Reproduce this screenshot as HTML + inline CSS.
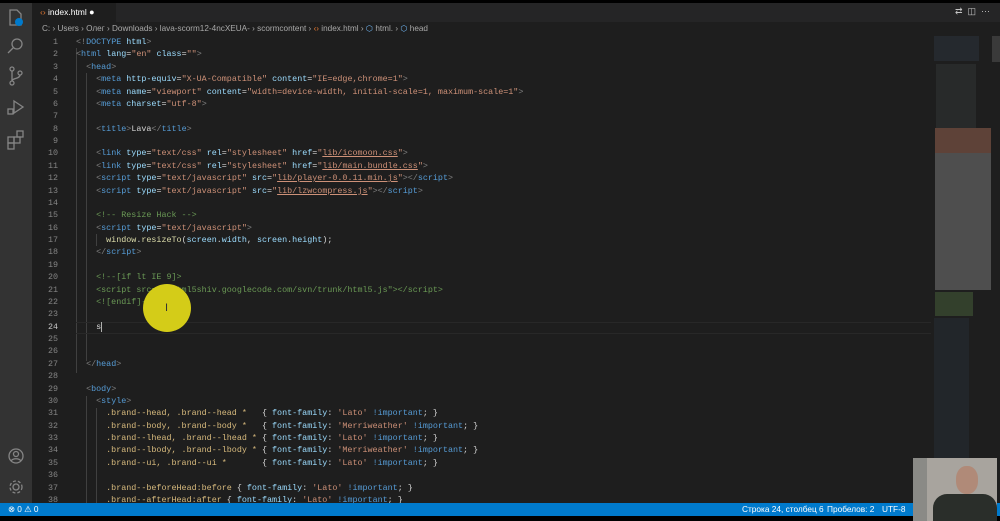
<!DOCTYPE html>
<html><head><meta charset="utf-8">
<style>
*{margin:0;padding:0;box-sizing:border-box}
body{width:1000px;height:521px;background:#1e1e1e;position:relative;overflow:hidden;font-family:"Liberation Sans",sans-serif}
.top{position:absolute;left:0;top:0;width:1000px;height:3px;background:#000}
.act{position:absolute;left:0;top:3px;width:32px;height:500px;background:#333}
.tabs{position:absolute;left:32px;top:3px;width:968px;height:19px;background:#252526}
.tab{position:absolute;left:0;top:0;height:19px;width:84px;background:#1e1e1e;color:#fff;font-size:8.5px;line-height:19px;padding-left:8px}
.bc{position:absolute;left:42px;top:23px;color:#a9a9a9;font-size:8.2px;white-space:nowrap}
.code{position:absolute;left:0;top:36px;font-family:"Liberation Mono",monospace;font-size:8.4px;line-height:12.38px;white-space:pre;color:#d4d4d4}
.ln{position:absolute;left:34px;width:24px;text-align:right;color:#858585}
.tx{position:absolute;left:76px}
.t{color:#569cd6}.g{color:#808080}.a{color:#9cdcfe}.s{color:#ce9178}.c{color:#6a9955}.u{text-decoration:underline}
.status{position:absolute;left:0;top:503px;width:1000px;height:13px;background:#007acc;color:#fff;font-size:8.3px;line-height:13px}
.bot{position:absolute;left:0;top:516px;width:1000px;height:5px;background:#000}
.mini{position:absolute;left:934px;top:36px;width:57px;height:422px}
.guide{position:absolute;width:1px;background:#404040}
</style></head><body>
<div class="top"></div>
<div class="act">
<svg width="32" height="500" fill="none" stroke="#858585" stroke-width="1.3">
<path d="M10 7h7l4 4v11h-11z M13 5v0"/><circle cx="19" cy="19" r="4" fill="#007acc" stroke="none"/>
<circle cx="17" cy="41" r="5"/><path d="M13 45l-5 5"/>
<circle cx="12" cy="66" r="2"/><circle cx="12" cy="80" r="2"/><circle cx="20" cy="70" r="2"/><path d="M12 68v10 M20 72c0 4-8 3-8 6"/>
<path d="M14 98l9 6-9 6z"/><rect x="8" y="106" width="5" height="5"/>
<rect x="8" y="134" width="6" height="6"/><rect x="14" y="134" width="6" height="6"/><rect x="8" y="140" width="6" height="6"/><rect x="17" y="128" width="6" height="6"/>
<circle cx="16" cy="453" r="7"/><circle cx="16" cy="451" r="2.5"/><path d="M11 458c2-3 8-3 10 0"/>
<circle cx="16" cy="484" r="3"/><circle cx="16" cy="484" r="6" stroke-dasharray="3 2"/>
</svg></div>
<div class="tabs"><div class="tab"><span style="color:#e37933">‹›</span> index.html <span style="font-size:9px">●</span></div>
<div style="position:absolute;right:10px;top:3px;color:#c5c5c5;font-size:9px">⇄ &nbsp;◫ &nbsp;···</div></div>
<div class="bc">C: › Users › Олег › Downloads › lava-scorm12-4ncXEUA- › scormcontent › <span style="color:#e37933">‹›</span> index.html › <span style="color:#75beff">⬡</span> html. › <span style="color:#75beff">⬡</span> head</div>
<div class="guide" style="left:76px;top:48px;height:325px"></div>
<div class="guide" style="left:86px;top:73px;height:288px"></div>
<div class="guide" style="left:96px;top:234px;height:12px"></div>
<div class="guide" style="left:86px;top:396px;height:107px"></div>
<div class="guide" style="left:96px;top:408px;height:95px"></div>
<div style="position:absolute;left:76px;top:322px;width:855px;height:12px;border-top:1px solid #282828;border-bottom:1px solid #282828"></div>
<div class="code">
<div class="ln" style="top:0">1
2
3
4
5
6
7
8
9
10
11
12
13
14
15
16
17
18
19
20
21
22
23
<span style="color:#c6c6c6">24</span>
25
26
27
28
29
30
31
32
33
34
35
36
37
38</div>
<div class="tx" style="top:0"><span class="g">&lt;!</span><span class="t">DOCTYPE</span> <span class="a">html</span><span class="g">&gt;</span>
<span class="g">&lt;</span><span class="t">html</span> <span class="a">lang</span>=<span class="s">"en"</span> <span class="a">class</span>=<span class="s">""</span><span class="g">&gt;</span>
  <span class="g">&lt;</span><span class="t">head</span><span class="g">&gt;</span>
    <span class="g">&lt;</span><span class="t">meta</span> <span class="a">http-equiv</span>=<span class="s">"X-UA-Compatible"</span> <span class="a">content</span>=<span class="s">"IE=edge,chrome=1"</span><span class="g">&gt;</span>
    <span class="g">&lt;</span><span class="t">meta</span> <span class="a">name</span>=<span class="s">"viewport"</span> <span class="a">content</span>=<span class="s">"width=device-width, initial-scale=1, maximum-scale=1"</span><span class="g">&gt;</span>
    <span class="g">&lt;</span><span class="t">meta</span> <span class="a">charset</span>=<span class="s">"utf-8"</span><span class="g">&gt;</span>

    <span class="g">&lt;</span><span class="t">title</span><span class="g">&gt;</span>Lava<span class="g">&lt;/</span><span class="t">title</span><span class="g">&gt;</span>

    <span class="g">&lt;</span><span class="t">link</span> <span class="a">type</span>=<span class="s">"text/css"</span> <span class="a">rel</span>=<span class="s">"stylesheet"</span> <span class="a">href</span>=<span class="s">"<span class="u">lib/icomoon.css</span>"</span><span class="g">&gt;</span>
    <span class="g">&lt;</span><span class="t">link</span> <span class="a">type</span>=<span class="s">"text/css"</span> <span class="a">rel</span>=<span class="s">"stylesheet"</span> <span class="a">href</span>=<span class="s">"<span class="u">lib/main.bundle.css</span>"</span><span class="g">&gt;</span>
    <span class="g">&lt;</span><span class="t">script</span> <span class="a">type</span>=<span class="s">"text/javascript"</span> <span class="a">src</span>=<span class="s">"<span class="u">lib/player-0.0.11.min.js</span>"</span><span class="g">&gt;&lt;/</span><span class="t">script</span><span class="g">&gt;</span>
    <span class="g">&lt;</span><span class="t">script</span> <span class="a">type</span>=<span class="s">"text/javascript"</span> <span class="a">src</span>=<span class="s">"<span class="u">lib/lzwcompress.js</span>"</span><span class="g">&gt;&lt;/</span><span class="t">script</span><span class="g">&gt;</span>

    <span class="c">&lt;!-- Resize Hack --&gt;</span>
    <span class="g">&lt;</span><span class="t">script</span> <span class="a">type</span>=<span class="s">"text/javascript"</span><span class="g">&gt;</span>
      <span style="color:#dcdcaa">window</span>.<span style="color:#dcdcaa">resizeTo</span>(<span class="a">screen</span>.<span class="a">width</span>, <span class="a">screen</span>.<span class="a">height</span>);
    <span class="g">&lt;/</span><span class="t">script</span><span class="g">&gt;</span>

    <span class="c">&lt;!--[if lt IE 9]&gt;</span>
    <span class="c">&lt;script src="//html5shiv.googlecode.com/svn/trunk/html5.js"&gt;&lt;/script&gt;</span>
    <span class="c">&lt;![endif]--&gt;</span>

    s<span style="border-left:1px solid #aeafad"></span>


  <span class="g">&lt;/</span><span class="t">head</span><span class="g">&gt;</span>

  <span class="g">&lt;</span><span class="t">body</span><span class="g">&gt;</span>
    <span class="g">&lt;</span><span class="t">style</span><span class="g">&gt;</span>
      <span style="color:#d7ba7d">.brand--head, .brand--head *</span>   { <span class="a">font-family</span>: <span class="s">'Lato'</span> <span class="t">!important</span>; }
      <span style="color:#d7ba7d">.brand--body, .brand--body *</span>   { <span class="a">font-family</span>: <span class="s">'Merriweather'</span> <span class="t">!important</span>; }
      <span style="color:#d7ba7d">.brand--lhead, .brand--lhead *</span> { <span class="a">font-family</span>: <span class="s">'Lato'</span> <span class="t">!important</span>; }
      <span style="color:#d7ba7d">.brand--lbody, .brand--lbody *</span> { <span class="a">font-family</span>: <span class="s">'Merriweather'</span> <span class="t">!important</span>; }
      <span style="color:#d7ba7d">.brand--ui, .brand--ui *</span>       { <span class="a">font-family</span>: <span class="s">'Lato'</span> <span class="t">!important</span>; }

      <span style="color:#d7ba7d">.brand--beforeHead:before</span> { <span class="a">font-family</span>: <span class="s">'Lato'</span> <span class="t">!important</span>; }
      <span style="color:#d7ba7d">.brand--afterHead:after</span> { <span class="a">font-family</span>: <span class="s">'Lato'</span> <span class="t">!important</span>; }</div>
</div>
<div style="position:absolute;left:143px;top:284px;width:48px;height:48px;border-radius:50%;background:#d4cc18"></div>
<div style="position:absolute;left:165px;top:302px;color:#333;font-size:11px">I</div>
<div class="mini">
<div style="position:absolute;left:0;top:0;width:45px;height:25px;background:#25292e"></div>
<div style="position:absolute;left:2px;top:28px;width:40px;height:90px;background:#282a2a"></div>
<div style="position:absolute;left:1px;top:92px;width:56px;height:25px;background:#5e4238"></div>
<div style="position:absolute;left:1px;top:117px;width:56px;height:137px;background:#4e4e4e"></div>
<div style="position:absolute;left:1px;top:256px;width:38px;height:24px;background:#33402c"></div>
<div style="position:absolute;left:0;top:282px;width:35px;height:140px;background:#22262a"></div>
</div>
<div style="position:absolute;left:992px;top:36px;width:8px;height:26px;background:#3a3a3a"></div>
<div class="status"><span style="position:absolute;left:8px">⊗ 0 ⚠ 0</span>
<span style="position:absolute;left:742px">Строка 24, столбец 6</span>
<span style="position:absolute;left:827px">Пробелов: 2</span>
<span style="position:absolute;left:882px">UTF-8</span></div>
<div class="bot"></div>
<div style="position:absolute;left:913px;top:458px;width:84px;height:63px;background:#a8a49e">
<div style="position:absolute;left:0;top:0;width:14px;height:63px;background:#8a8a86"></div>
<div style="position:absolute;left:43px;top:8px;width:22px;height:28px;border-radius:45%;background:#b08a78"></div>
<div style="position:absolute;left:20px;top:36px;width:64px;height:27px;border-radius:14px 14px 0 0;background:#2a2e2a"></div>
</div>
</body></html>
